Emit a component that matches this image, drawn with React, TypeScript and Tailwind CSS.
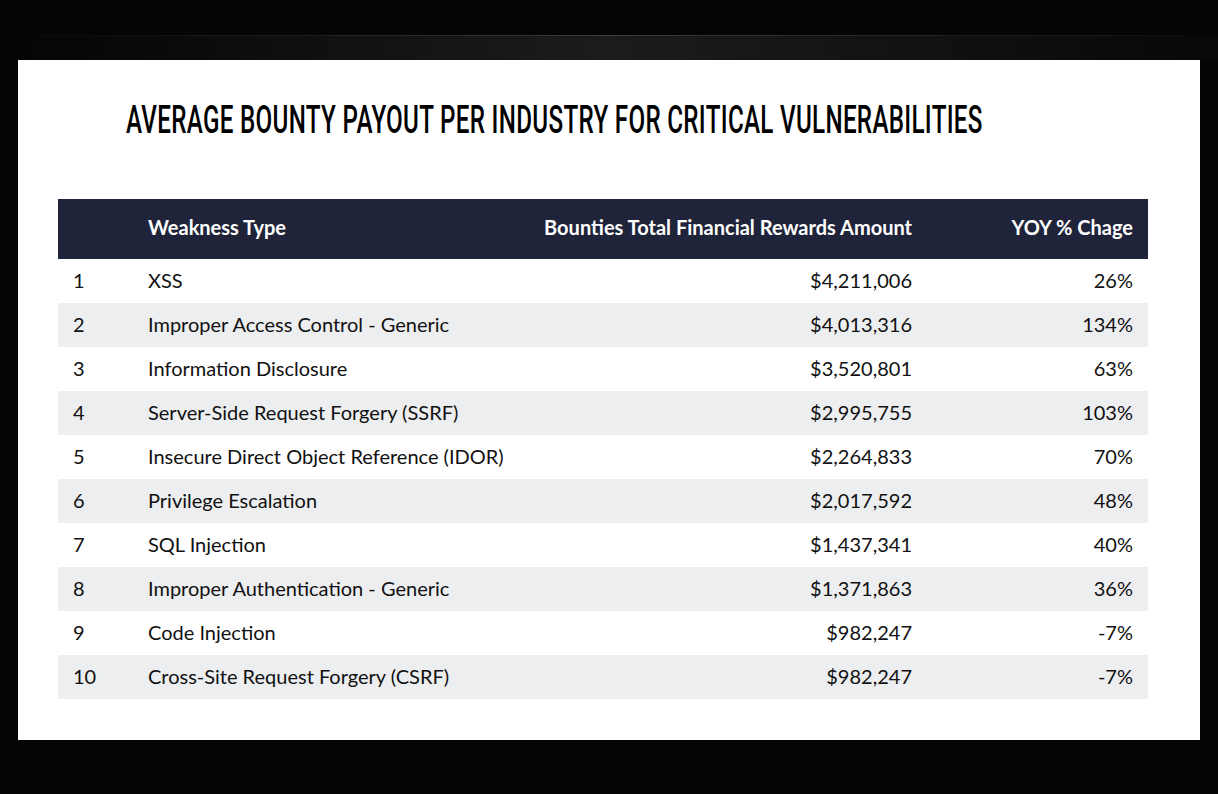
const ROWS = [
  { n: 1, type: "XSS", amount: "$4,211,006", yoy: "26%" },
  { n: 2, type: "Improper Access Control - Generic", amount: "$4,013,316", yoy: "134%" },
  { n: 3, type: "Information Disclosure", amount: "$3,520,801", yoy: "63%" },
  { n: 4, type: "Server-Side Request Forgery (SSRF)", amount: "$2,995,755", yoy: "103%" },
  { n: 5, type: "Insecure Direct Object Reference (IDOR)", amount: "$2,264,833", yoy: "70%" },
  { n: 6, type: "Privilege Escalation", amount: "$2,017,592", yoy: "48%" },
  { n: 7, type: "SQL Injection", amount: "$1,437,341", yoy: "40%" },
  { n: 8, type: "Improper Authentication - Generic", amount: "$1,371,863", yoy: "36%" },
  { n: 9, type: "Code Injection", amount: "$982,247", yoy: "-7%" },
  { n: 10, type: "Cross-Site Request Forgery (CSRF)", amount: "$982,247", yoy: "-7%" },
]

export default function App() {
  return (
    <div className="w-[1218px] h-[794px] bg-[#050505] overflow-hidden font-['Lato',sans-serif]">
      {/* backdrop strip */}
      <div className="pt-[35px]">
        <div className="mx-[35px] h-px bg-gradient-to-r from-[#0a0a0a] via-[#3a3a3a] to-[#111]" />
        <div className="h-[24px] bg-gradient-to-r from-[#050505] via-[#1c1c1c] to-[#080808]" />
      </div>

      {/* card */}
      <div className="ml-[18px] w-[1182px] h-[680px] bg-white pt-[42px] px-[40px]">
        <h1 className="ml-[68px] h-[36px] whitespace-nowrap origin-left scale-x-[0.62] text-[39px] leading-[36px] font-medium tracking-[0.5px] text-black font-['Roboto',sans-serif]">
          AVERAGE BOUNTY PAYOUT PER INDUSTRY FOR CRITICAL VULNERABILITIES
        </h1>

        <table className="mt-[61px] w-[1090px] border-collapse text-[20px] text-[#111]">
          <thead>
            <tr className="bg-[#20243a] text-white h-[60px] text-[20px] font-bold">
              <th className="w-[90px] px-[15px]" />
              <th className="text-left pb-[5px]">Weakness Type</th>
              <th className="text-right w-[420px] pr-[15px] pb-[5px]">Bounties Total Financial Rewards Amount</th>
              <th className="text-right w-[221px] pr-[15px] pb-[5px]">YOY % Chage</th>
            </tr>
          </thead>
          <tbody>
            {ROWS.map((r, i) => (
              <tr key={r.n} className={`h-[44px] ${i % 2 === 1 ? "bg-[#edeef0]" : "bg-white"}`}>
                <td className="pl-[15px] pb-[2px]">{r.n}</td>
                <td className="pb-[2px]">{r.type}</td>
                <td className="text-right pr-[15px] pb-[2px]">{r.amount}</td>
                <td className="text-right pr-[15px] pb-[2px]">{r.yoy}</td>
              </tr>
            ))}
          </tbody>
        </table>
      </div>
    </div>
  )
}
